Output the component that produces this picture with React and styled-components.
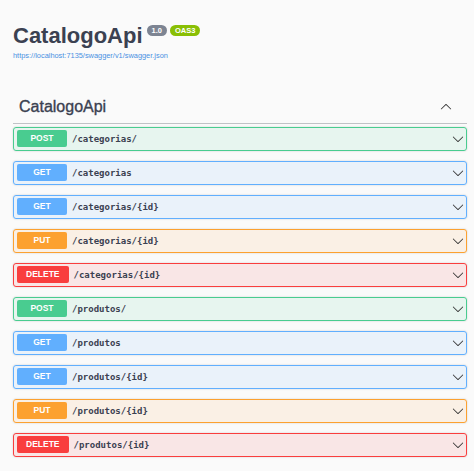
import styled, { createGlobalStyle } from 'styled-components'

const GlobalStyle = createGlobalStyle`
  html, body {
    margin: 0;
    padding: 0;
    background: #ffffff;
  }
  * {
    box-sizing: border-box;
  }
`

const METHODS = {
  POST: { color: '#49cc90', bg: 'rgba(73, 204, 144, 0.1)' },
  GET: { color: '#61affe', bg: 'rgba(97, 175, 254, 0.1)' },
  PUT: { color: '#fca130', bg: 'rgba(252, 161, 48, 0.1)' },
  DELETE: { color: '#f93e3e', bg: 'rgba(249, 62, 62, 0.1)' },
}

const operations = [
  { method: 'POST', path: '/categorias/' },
  { method: 'GET', path: '/categorias' },
  { method: 'GET', path: '/categorias/{id}' },
  { method: 'PUT', path: '/categorias/{id}' },
  { method: 'DELETE', path: '/categorias/{id}' },
  { method: 'POST', path: '/produtos/' },
  { method: 'GET', path: '/produtos' },
  { method: 'GET', path: '/produtos/{id}' },
  { method: 'PUT', path: '/produtos/{id}' },
  { method: 'DELETE', path: '/produtos/{id}' },
]

const Page = styled.div`
  background: #fafafa;
  min-height: 471px;
  padding: 25px 7px 13px 13px;
  font-family: 'Liberation Sans', Arial, sans-serif;
  color: #3b4151;
`

const InfoHead = styled.div`
  display: flex;
  align-items: flex-start;
`

const Title = styled.h2`
  margin: 0;
  font-size: 22px;
  line-height: 22px;
  font-weight: 700;
  color: #3b4151;
`

const Badge = styled.span`
  display: inline-block;
  margin-left: ${({ $first }) => ($first ? '4px' : '3px')};
  padding: 1.5px 5px;
  border-radius: 20px;
  background: ${({ $bg }) => $bg};
  color: #ffffff;
  font-size: 7.5px;
  line-height: 8px;
  font-weight: 700;
`

const Url = styled.a`
  display: block;
  margin-top: 4px;
  font-size: 7.4px;
  line-height: 9px;
  color: #4990e2;
  text-decoration: none;
`

const TagHeader = styled.div`
  display: flex;
  align-items: center;
  justify-content: space-between;
  margin-top: 39px;
  margin-bottom: 3px;
  padding: 0 15px 8px 6px;
  border-bottom: 1px solid rgba(59, 65, 81, 0.3);
`

const TagName = styled.h3`
  margin: 0;
  font-size: 16px;
  line-height: 16px;
  font-weight: 400;
  color: #3b4151;
  -webkit-text-stroke: 0.35px #3b4151;
`

const OpList = styled.div`
  display: flex;
  flex-direction: column;
  gap: 10px;
`

const OpBlock = styled.div`
  display: flex;
  align-items: center;
  height: 24px;
  padding: 2px 2px 3px 3px;
  border: 1px solid ${({ $method }) => METHODS[$method].color};
  border-radius: 3px;
  background: ${({ $method }) => METHODS[$method].bg};
  box-shadow: 0 0 2px rgba(0, 0, 0, 0.19);
`

const Method = styled.span`
  min-width: 50px;
  height: 17px;
  padding: 0 9px;
  border-radius: 2px;
  background: ${({ $method }) => METHODS[$method].color};
  color: #ffffff;
  font-size: 8.5px;
  line-height: 17px;
  font-weight: 700;
  text-align: center;
`

const Path = styled.span`
  flex: 1;
  padding-left: 5px;
  font-family: 'DejaVu Sans Mono', 'Liberation Mono', monospace;
  font-size: 9px;
  font-weight: 600;
  color: #3b4151;
`

const Arrow = styled.svg`
  width: 12px;
  height: 12px;
  flex-shrink: 0;
  fill: #333333;
  transform: ${({ $up }) => ($up ? 'rotate(180deg)' : 'none')};
`

function Chevron({ up }) {
  return (
    <Arrow $up={up} viewBox="0 0 20 20">
      <path d="M17.418 6.109c.272-.268.709-.268.979 0s.271.701 0 .969l-7.908 7.83c-.27.268-.707.268-.979 0l-7.908-7.83c-.27-.268-.27-.701 0-.969.271-.268.709-.268.979 0L10 13.25l7.418-7.141z" />
    </Arrow>
  )
}

export default function App() {
  return (
    <>
      <GlobalStyle />
      <Page>
        <InfoHead>
          <Title>CatalogoApi</Title>
          <Badge $first $bg="#7d8492">1.0</Badge>
          <Badge $bg="#89bf04">OAS3</Badge>
        </InfoHead>
        <Url href="#">https://localhost:7135/swagger/v1/swagger.json</Url>

        <TagHeader>
          <TagName>CatalogoApi</TagName>
          <Chevron up />
        </TagHeader>

        <OpList>
          {operations.map((op, i) => (
            <OpBlock key={i} $method={op.method}>
              <Method $method={op.method}>{op.method}</Method>
              <Path>{op.path}</Path>
              <Chevron />
            </OpBlock>
          ))}
        </OpList>
      </Page>
    </>
  )
}
